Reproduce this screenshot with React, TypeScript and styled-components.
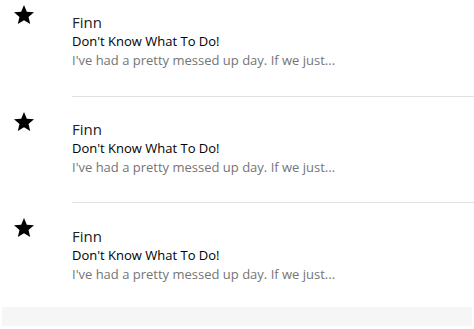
import React from 'react';
import styled, {createGlobalStyle} from "styled-components";

const messages = [
    {from: "Finn", subject: "Don't Know What To Do!", preview: "I've had a pretty messed up day. If we just..."},
    {from: "Finn", subject: "Don't Know What To Do!", preview: "I've had a pretty messed up day. If we just..."},
    {from: "Finn", subject: "Don't Know What To Do!", preview: "I've had a pretty messed up day. If we just..."},
];

const StarIcon = () => (
    <svg width="24" height="24" viewBox="0 0 24 24">
        <path d="M12 17.27L18.18 21l-1.64-7.03L22 9.24l-7.19-.61L12 2 9.19 8.63 2 9.24l5.46 4.73L5.82 21z" fill="#000"/>
    </svg>
);

const App = () => {
    return (
        <>
            <GlobalStyle/>
            <Page>
                <List>
                    {messages.map((m, i) => (
                        <li key={i}>
                            <Row>
                                <Icon><StarIcon/></Icon>
                                <Texts>
                                    <From>{m.from}</From>
                                    <Subject>{m.subject}</Subject>
                                    <Preview>{m.preview}</Preview>
                                </Texts>
                            </Row>
                            {i < messages.length - 1 && <Divider/>}
                        </li>
                    ))}
                </List>
                <Footer/>
            </Page>
        </>
    );
};

const GlobalStyle = createGlobalStyle`
  body {
    margin: 0;
    background: #fff;
    font-family: "Open Sans", "Liberation Sans", sans-serif;
  }
`

const Page = styled.div`
  width: 474px;
  height: 329px;
  overflow: hidden;
  display: flex;
  flex-direction: column;
`

const List = styled.ul`
  list-style: none;
  margin: 0;
  padding: 0;
`

const Row = styled.div`
  display: flex;
  align-items: flex-start;
  padding: 3px 0 0 12px;
`

const Icon = styled.div`
  width: 24px;
  height: 24px;
  margin-right: 36px;
  flex-shrink: 0;
  svg {
    display: block;
  }
`

const Texts = styled.div`
  display: flex;
  flex-direction: column;
  padding-top: 9.2px;
`

const From = styled.div`
  font-size: 15px;
  line-height: 20px;
  color: #212121;
`

const Subject = styled.div`
  font-size: 13px;
  line-height: 19px;
  color: #000;
`

const Preview = styled.div`
  font-size: 13px;
  line-height: 19px;
  color: #757575;
`

const Divider = styled.hr`
  border: none;
  height: 1px;
  background: #e0e0e0;
  margin: 25.5px 0 10px 72px;
`

const Footer = styled.div`
  height: 19px;
  margin: 23.5px 2px 0;
  background: #f6f6f6;
`

export default App;
